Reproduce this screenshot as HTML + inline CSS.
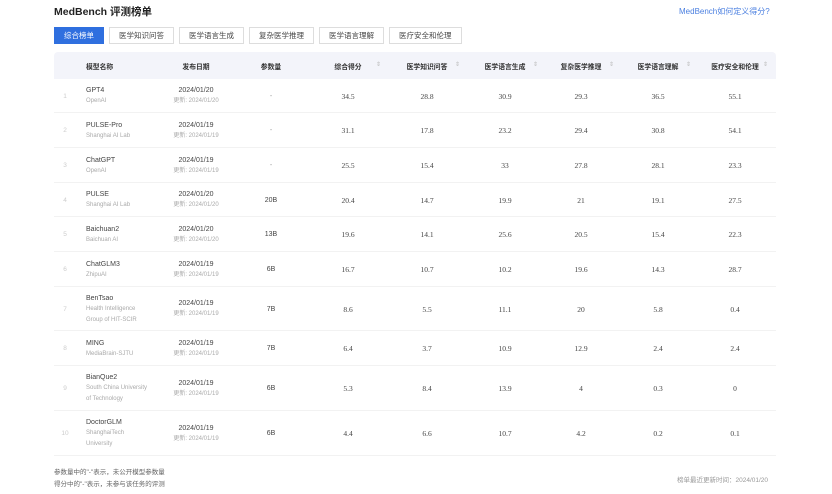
<!DOCTYPE html>
<html><head><meta charset="utf-8"><style>
*{margin:0;padding:0;box-sizing:border-box}
body{width:832px;height:494px;background:#fff;font-family:"Liberation Sans","Noto Sans CJK SC",sans-serif;position:relative;overflow:hidden;color:#333}
.t{position:absolute;left:54px;top:4px;font-size:10.5px;font-weight:bold;color:#222}
.lk{position:absolute;left:679px;top:6px;font-size:8px;color:#4a7fe0}
.tabs{position:absolute;left:54px;top:27px;display:flex;gap:5px}
.tab{height:17px;border:1px solid #ddd;font-size:7.5px;color:#444;padding:0 9px;line-height:15px;white-space:nowrap}
.tab.on{background:#2f6fdf;border-color:#2f6fdf;color:#fff}
.hd{position:absolute;left:54px;top:52px;width:722px;height:27px;background:#f3f4fa;border-radius:4px 4px 0 0}
.c{position:absolute;display:flex;flex-direction:column;justify-content:center;align-items:center;font-size:7px;text-align:center;font-weight:normal}
.hc{font-weight:bold;color:#333;font-size:6.8px}
.row{position:absolute;left:54px;width:722px;border-bottom:1px solid #f2f2f2}
.nm{font-size:7px;color:#444;line-height:11px}
.sb{font-size:6px;color:#aaa;line-height:11px}
.ar{color:#bbb;font-size:6px;position:absolute}
.f{position:absolute;font-size:6.5px;color:#666}
</style></head><body>
<div class="t">MedBench 评测榜单</div>
<div class="lk">MedBench如何定义得分?</div>
<div class="tabs"><div class="tab on">综合榜单</div><div class="tab">医学知识问答</div><div class="tab">医学语言生成</div><div class="tab">复杂医学推理</div><div class="tab">医学语言理解</div><div class="tab">医疗安全和伦理</div></div>
<div class="hd"></div>
<div id="tb"></div>
<div class="f" style="left:54px;top:466px">参数量中的"-"表示，未公开模型参数量</div>
<div class="f" style="left:54px;top:478px">得分中的"-"表示，未参与该任务的评测</div>
<div class="f" style="left:677px;top:474px;color:#999">榜单最近更新时间：2024/01/20</div>
<script>
const cx=[196,271,348,427,505,581,658,735];
const hd=["发布日期","参数量","综合得分","医学知识问答","医学语言生成","复杂医学推理","医学语言理解","医疗安全和伦理"];
let h='<div class="c hc" style="left:86px;top:52px;height:27px;align-items:flex-start">模型名称</div>';
hd.forEach((t,i)=>{h+=`<div class="c hc" style="left:${cx[i]-40}px;width:80px;top:52px;height:27px">${t}</div>`;if(i>=2)h+=`<div class="ar" style="left:${cx[i]+28}px;top:61px">⇕</div>`});
const R=[
[79,34,"GPT4",["OpenAI"],"2024/01/20","-",["34.5","28.8","30.9","29.3","36.5","55.1"]],
[113,35,"PULSE-Pro",["Shanghai AI Lab"],"2024/01/19","-",["31.1","17.8","23.2","29.4","30.8","54.1"]],
[148,35,"ChatGPT",["OpenAI"],"2024/01/19","-",["25.5","15.4","33","27.8","28.1","23.3"]],
[183,34,"PULSE",["Shanghai AI Lab"],"2024/01/20","20B",["20.4","14.7","19.9","21","19.1","27.5"]],
[217,35,"Baichuan2",["Baichuan AI"],"2024/01/20","13B",["19.6","14.1","25.6","20.5","15.4","22.3"]],
[252,35,"ChatGLM3",["ZhipuAI"],"2024/01/19","6B",["16.7","10.7","10.2","19.6","14.3","28.7"]],
[287,44,"BenTsao",["Health Intelligence","Group of HIT-SCIR"],"2024/01/19","7B",["8.6","5.5","11.1","20","5.8","0.4"]],
[331,35,"MING",["MediaBrain-SJTU"],"2024/01/19","7B",["6.4","3.7","10.9","12.9","2.4","2.4"]],
[366,45,"BianQue2",["South China University","of Technology"],"2024/01/19","6B",["5.3","8.4","13.9","4","0.3","0"]],
[411,45,"DoctorGLM",["ShanghaiTech","University"],"2024/01/19","6B",["4.4","6.6","10.7","4.2","0.2","0.1"]]];
R.forEach((r,k)=>{const [y,ht,n,s,d,p,v]=r;
h+=`<div class="row" style="top:${y}px;height:${ht}px"></div>`;
h+=`<div class="c" style="left:58px;width:14px;top:${y}px;height:${ht}px;color:#ccc;font-size:6.5px">${k+1}</div>`;
h+=`<div class="c" style="left:86px;top:${y}px;height:${ht}px;align-items:flex-start;text-align:left"><div class="nm">${n}</div>${s.map(x=>`<div class="sb">${x}</div>`).join("")}</div>`;
h+=`<div class="c" style="left:${cx[0]-40}px;width:80px;top:${y}px;height:${ht}px"><div class="nm">${d}</div><div class="sb">更新: ${d}</div></div>`;
h+=`<div class="c" style="left:${cx[1]-30}px;width:60px;top:${y}px;height:${ht}px;color:${k<3?'#999':'#444'}">${p}</div>`;
v.forEach((x,i)=>{h+=`<div class="c" style="left:${cx[i+2]-30}px;width:60px;top:${y}px;height:${ht}px;font-family:'Liberation Serif',serif;font-size:7.5px;color:#444">${x}</div>`});
});
document.getElementById("tb").innerHTML=h;
</script>
</body></html>
